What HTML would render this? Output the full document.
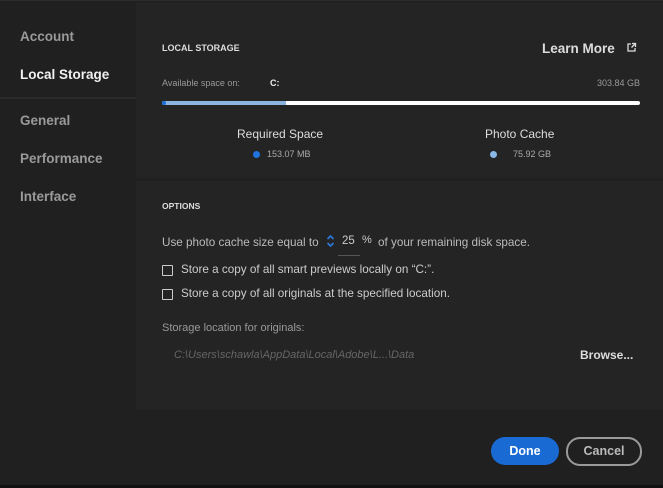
<!DOCTYPE html>
<html><head><style>
body{margin:0;width:663px;height:488px;background:#202020;font-family:"Liberation Sans",sans-serif;position:relative;overflow:hidden;color:#ccc}
.a{position:absolute;white-space:nowrap}
.nav{font-size:13.5px;color:#9a9a9a;font-weight:bold;left:20px}
.sm{font-size:9px;color:#bbb}
</style></head><body>
<div class="a" style="left:0;top:0;width:663px;height:1px;background:#2c2c2c"></div>
<div class="a" style="left:136px;top:2px;width:527px;height:176px;background:#242424"></div>
<div class="a" style="left:136px;top:181px;width:527px;height:229px;background:#242424"></div>
<div class="a" style="left:0;top:97px;width:136px;height:2px;background:#2a2a2a"></div>
<div class="a" style="left:0;top:485px;width:663px;height:3px;background:#111"></div>

<div class="a nav" style="top:29px">Account</div>
<div class="a nav" style="top:67px;color:#f0f0f0">Local Storage</div>
<div class="a nav" style="top:113px">General</div>
<div class="a nav" style="top:151px">Performance</div>
<div class="a nav" style="top:189px">Interface</div>

<div class="a" style="left:162px;top:43px;font-size:9px;font-weight:bold;color:#ddd">LOCAL STORAGE</div>
<div class="a" style="left:542px;top:41px;font-size:13.5px;font-weight:bold;color:#ddd">Learn More</div>
<svg class="a" style="left:626px;top:42px" width="11" height="11" viewBox="0 0 11 11"><path d="M5 2H2v7h7V6M6 1.5h3.5V5M9.5 1.5L5.5 5.5" stroke="#ddd" fill="none" stroke-width="1.3"/></svg>
<div class="a sm" style="left:162px;top:78px;color:#999">Available space on:</div>
<div class="a sm" style="left:270px;top:78px;font-weight:bold;color:#eee">C:</div>
<div class="a sm" style="left:597px;top:78px;color:#999">303.84 GB</div>
<div class="a" style="left:162px;top:101px;width:478px;height:4px;background:#fff;border-radius:2px"></div>
<div class="a" style="left:162px;top:101px;width:124px;height:4px;background:#8ab3e0;border-radius:2px 0 0 2px"></div>
<div class="a" style="left:162px;top:101px;width:4px;height:4px;background:#1a6fd6;border-radius:2px"></div>
<div class="a" style="left:237px;top:127px;font-size:12px;color:#ddd">Required Space</div>
<div class="a" style="left:253px;top:151px;width:7px;height:7px;border-radius:50%;background:#1f74e0"></div>
<div class="a sm" style="left:267px;top:149px;color:#aaa">153.07 MB</div>
<div class="a" style="left:485px;top:127px;font-size:12px;color:#ddd">Photo Cache</div>
<div class="a" style="left:490px;top:151px;width:7px;height:7px;border-radius:50%;background:#8ab8e6"></div>
<div class="a sm" style="left:513px;top:149px;color:#aaa">75.92 GB</div>

<div class="a" style="left:162px;top:201px;font-size:8.5px;font-weight:bold;color:#ddd">OPTIONS</div>
<div class="a" style="left:162px;top:236px;font-size:11.7px;color:#bbb">Use photo cache size equal to</div>
<svg class="a" style="left:326px;top:234px" width="9" height="14" viewBox="0 0 9 14"><path d="M1.5 5L4.5 2L7.5 5M1.5 9L4.5 12L7.5 9" stroke="#2a7be0" fill="none" stroke-width="1.6"/></svg>
<div class="a" style="left:342px;top:235px;font-size:11.5px;color:#ccc">25</div>
<div class="a" style="left:338px;top:255px;width:22px;height:1px;background:#555"></div>
<div class="a" style="left:362px;top:234px;font-size:11px;color:#ccc">%</div>
<div class="a" style="left:378px;top:236px;font-size:11.7px;color:#bbb">of your remaining disk space.</div>
<div class="a" style="left:162px;top:265px;width:9px;height:9px;border:1px solid #ccc;border-radius:1px"></div>
<div class="a" style="left:181px;top:263px;font-size:11.7px;color:#ccc">Store a copy of all smart previews locally on “C:”.</div>
<div class="a" style="left:162px;top:289px;width:9px;height:9px;border:1px solid #ccc;border-radius:1px"></div>
<div class="a" style="left:181px;top:287px;font-size:11.7px;color:#ccc">Store a copy of all originals at the specified location.</div>
<div class="a" style="left:162px;top:322px;font-size:11px;color:#999">Storage location for originals:</div>
<div class="a" style="left:174px;top:349px;font-size:11px;font-style:italic;color:#666">C:\Users\schawla\AppData\Local\Adobe\L...\Data</div>
<div class="a" style="left:580px;top:348px;font-size:12px;font-weight:bold;color:#ddd">Browse...</div>

<div class="a" style="left:491px;top:437px;width:68px;height:28px;border-radius:14px;background:#1a6ad4;color:#fff;font-size:12.5px;font-weight:bold;text-align:center;line-height:28px">Done</div>
<div class="a" style="left:566px;top:437px;width:72px;height:25px;border-radius:14px;border:2px solid #9a9a9a;color:#bbb;font-size:12.5px;font-weight:bold;text-align:center;line-height:25px">Cancel</div>
</body></html>
